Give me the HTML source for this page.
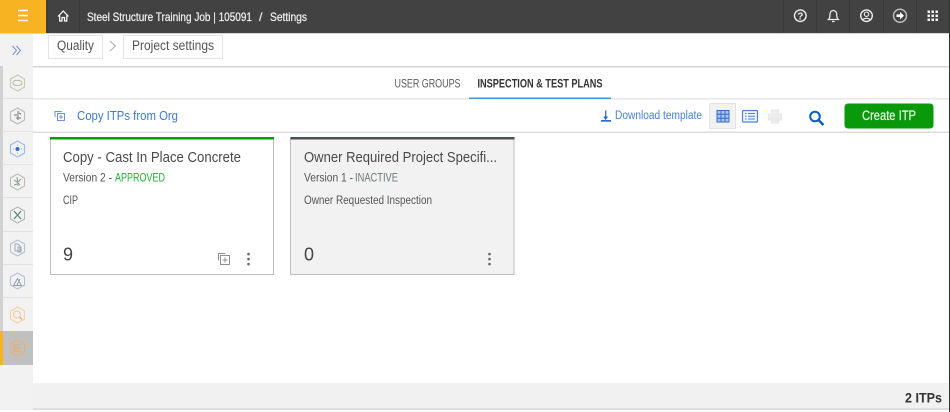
<!DOCTYPE html>
<html><head><meta charset="utf-8"><style>
html,body{margin:0;padding:0;background:#fff;width:950px;height:412px;overflow:hidden}
svg{display:block;filter:blur(0.3px)}
text{font-family:"Liberation Sans",sans-serif}
</style></head><body>
<svg width="950" height="412" viewBox="0 0 950 412" xmlns="http://www.w3.org/2000/svg">
<defs>
<symbol id="hex" viewBox="0 0 17 18" overflow="visible"><path d="M8.5 1 L15.5 5 V13 L8.5 17 L1.5 13 V5 Z" fill="none" stroke-width="1.1"/></symbol>
</defs>
<rect width="950" height="412" fill="#fff"/>

<!-- header -->
<rect width="950" height="33" fill="#424242"/>
<rect y="33" width="950" height="1" fill="#d5d5d5"/>
<rect width="46" height="33" fill="#f7b322"/>
<path d="M18 10.500h10M18 15.500h10M18 20.500h10" stroke="#fff" stroke-width="1.500"/>
<path d="M47.500 0V33M79.500 0V33M783.500 0V33M816.500 0V33M849.500 0V33M883.500 0V33M916.500 0V33" stroke="#383838"/>
<path d="M58 16.500 L63.300 11 L68.500 16.500 M59.700 15.500 V21 H62 V17.500 H64.500 V21 H66.800 V15.500" fill="none" stroke="#fff" stroke-width="1.200"/>
<text x="87" y="21" font-size="12" fill="#eee" stroke="#eee" stroke-width=".25" textLength="165" lengthAdjust="spacingAndGlyphs">Steel Structure Training Job | 105091</text>
<text x="259" y="21" font-size="12" fill="#eee" stroke="#eee" stroke-width=".25">/</text>
<text x="270" y="21" font-size="12" fill="#eee" stroke="#eee" stroke-width=".25" textLength="37" lengthAdjust="spacingAndGlyphs">Settings</text>

<circle cx="800.300" cy="15.700" r="5.800" fill="none" stroke="#eee" stroke-width="1.400"/>
<text x="800.300" y="19.500" font-size="10" font-weight="bold" fill="#eee" text-anchor="middle">?</text>
<path d="M828.500 19.500 C830 18 830 16 830 14.500 C830 12 831.300 10.500 833.300 10.500 C835.300 10.500 836.700 12 836.700 14.500 C836.700 16 836.700 18 838.200 19.500 Z" fill="none" stroke="#eee" stroke-width="1.300"/>
<path d="M832 21.500h2.600" stroke="#eee" stroke-width="1.300"/>
<circle cx="866.500" cy="15.700" r="5.800" fill="none" stroke="#eee" stroke-width="1.400"/>
<circle cx="866.500" cy="14.200" r="2.200" fill="none" stroke="#eee" stroke-width="1.100"/>
<path d="M863 20 C863.700 17.800 869.300 17.800 870 20" fill="none" stroke="#eee" stroke-width="1.100"/>
<circle cx="900" cy="15.700" r="6.500" fill="none" stroke="#bbb" stroke-width="1.500"/>
<path d="M896.500 14.400h3.500v-2.500l4 3.800-4 3.800v-2.500h-3.500z" fill="#fff"/>
<path d="M927.500 10.500h2.500v2.500h-2.500zM931.500 10.500h2.500v2.500h-2.500zM935.500 10.500h2.500v2.500h-2.500zM927.500 14.500h2.500v2.500h-2.500zM931.500 14.500h2.500v2.500h-2.500zM935.500 14.500h2.500v2.500h-2.500zM927.500 18.500h2.500v2.500h-2.500zM931.500 18.500h2.500v2.500h-2.500zM935.500 18.500h2.500v2.500h-2.500z" fill="#f2f0f0"/>

<!-- sidebar -->
<rect x="0" y="34" width="33" height="376" fill="#f2f2f2"/>
<rect x="0" y="66" width="3" height="299" fill="#d2d2d2"/>
<path d="M3 98.500H33M3 131.500H33M3 164.500H33M3 197.500H33M3 231.500H33M3 264.500H33M3 297.500H33" stroke="#e2e2e2"/>
<rect x="0" y="331" width="33" height="34" fill="#c0c0c0"/>
<rect x="0" y="331" width="3" height="34" fill="#f7b322"/>
<path d="M12.500 46 L16.500 50.500 L12.500 55 M16.500 46 L20.500 50.500 L16.500 55" fill="none" stroke="#6f94d6" stroke-width="1"/>

<use href="#hex" x="9" y="74" width="17" height="18" stroke="#c3cbb3"/>
<path d="M13 83 C13 80.500 16 80 17.500 80.500 C19.500 80 22 81 22 83 C22 85 19.500 85.500 17.500 85.500 C15.500 85.500 13 85 13 83Z" fill="none" stroke="#b7bbaa"/>
<use href="#hex" x="9" y="107" width="17" height="18" stroke="#b5bbc0"/>
<path d="M18 111v9M14 115h3M16 118h5M19 113l2 1" stroke="#777" stroke-width="1" fill="none"/>
<use href="#hex" x="9" y="140" width="17" height="18" stroke="#9db9ec"/>
<circle cx="17.500" cy="149" r="2" fill="#2f6bd0"/>
<path d="M13 149h1M21 149h1M17.500 144.500v1M17.500 152.500v1" stroke="#8caee8"/>
<use href="#hex" x="9" y="173" width="17" height="18" stroke="#bcc0b4"/>
<path d="M17 177l1 9M14 180l3 2M21 179l-3 3M14 185l3-1M20 185l-2-2" stroke="#86a08a" fill="none"/>
<use href="#hex" x="9" y="206" width="17" height="18" stroke="#b4b9bc"/>
<path d="M14 211l7 8M21 211l-7 8" stroke="#5a9075" stroke-width="1.300"/>
<use href="#hex" x="9" y="239" width="17" height="18" stroke="#b5c0d2"/>
<path d="M15 244h3l2 2v5h-5zM18 247h3v5h-3z" fill="none" stroke="#9dabbf"/>
<use href="#hex" x="9" y="272" width="17" height="18" stroke="#b5c0d2"/>
<path d="M13.500 285.500h8l-4-7zM17 285l3-6" fill="none" stroke="#8f9db6"/>
<use href="#hex" x="9" y="306" width="17" height="18" stroke="#f7d0a5"/>
<circle cx="17" cy="314.500" r="3.500" fill="none" stroke="#f5c794"/>
<path d="M19.500 317l2.500 2.500" stroke="#f0a860" stroke-width="1.200"/>
<use href="#hex" x="9" y="339" width="17" height="18" stroke="#ecb06a"/>
<path d="M14 345v6h1M14 345h7M15 348h6M15 351h6" fill="none" stroke="#ebac64"/>

<!-- breadcrumb -->
<rect x="48.500" y="35.500" width="54" height="23" fill="#fff" stroke="#e4e4e4"/>
<text x="57" y="50" font-size="13.500" fill="#555" textLength="37" lengthAdjust="spacingAndGlyphs">Quality</text>
<path d="M110 41 L115.500 46 L110 51" fill="none" stroke="#aaa" stroke-width="1"/>
<rect x="123.500" y="35.500" width="99" height="23" fill="#fff" stroke="#e4e4e4"/>
<text x="132" y="50" font-size="13.500" fill="#555" textLength="82" lengthAdjust="spacingAndGlyphs">Project settings</text>

<!-- lines -->
<rect x="33" y="66" width="917" height="1.500" fill="#d6d6d6"/>
<rect x="33" y="98" width="917" height="1.500" fill="#e8e8e8"/>
<rect x="33" y="131.500" width="917" height="1.500" fill="#dcdcdc"/>

<!-- tabs -->
<text x="394.500" y="87.500" font-size="11.500" fill="#5a5a5a" textLength="66" lengthAdjust="spacingAndGlyphs">USER GROUPS</text>
<text x="477.500" y="87.500" font-size="11.500" font-weight="bold" fill="#333" textLength="125" lengthAdjust="spacingAndGlyphs">INSPECTION &amp; TEST PLANS</text>
<rect x="469" y="97.500" width="142" height="1.500" fill="#3d9ad1"/>

<!-- toolbar -->
<path d="M55 117 V111.500 H62 M57.500 113.500 H64.500 V120.500 H57.500 Z M61 115v4M59 117h4" fill="none" stroke="#6f94d6" stroke-width="1"/>
<text x="77" y="120" font-size="13" fill="#3f78d0" textLength="101" lengthAdjust="spacingAndGlyphs">Copy ITPs from Org</text>
<path d="M605.700 110.500V119M604 116.500l1.700 2.500 1.700-2.500" fill="none" stroke="#2a6fd0" stroke-width="1.300"/>
<rect x="601" y="120" width="10" height="1.700" fill="#2a6fd0"/>
<text x="615" y="119" font-size="11.500" fill="#4a80d4" textLength="87" lengthAdjust="spacingAndGlyphs">Download template</text>

<rect x="709.500" y="103.500" width="26" height="25" fill="#f2f2f2" stroke="#e4e4e4"/>
<rect x="717" y="110.500" width="12" height="11.500" fill="#a9c4f0" stroke="#2f6bd0"/>
<path d="M721 110.500v11.500M725 110.500v11.500M717 114.300h12M717 118.200h12" stroke="#2f6bd0" stroke-width="1"/>
<rect x="742.500" y="110.500" width="15" height="11.500" rx="1" fill="#eef3fc" stroke="#4f82dc" stroke-width="1.200"/>
<path d="M745 113.500h1.500M748 113.500h7M745 116.300h1.500M748 116.300h7M745 119h1.500M748 119h7" stroke="#4f82dc"/>
<path d="M771.500 113v-3h7v3M768.500 114h13v6h-13zM771.500 118h7v5h-7z" fill="#eee" stroke="#e6e6e6"/>
<circle cx="815" cy="116.500" r="4.800" fill="none" stroke="#0a5fc0" stroke-width="2"/>
<path d="M818.500 120L823.500 125" stroke="#0a5fc0" stroke-width="2.400"/>
<rect x="844.500" y="103.500" width="89" height="25" rx="3.500" fill="#0a990a"/>
<text x="862" y="120" font-size="13.500" fill="#e8f6e8" stroke="#e8f6e8" stroke-width=".2" textLength="54" lengthAdjust="spacingAndGlyphs">Create ITP</text>

<!-- card 1 -->
<rect x="50.500" y="137.500" width="223" height="137" fill="#fff" stroke="#bdbdbd"/>
<rect x="50" y="137" width="224" height="2.500" fill="#0a990a"/>
<text x="63" y="162" font-size="15" fill="#4a4a4a" textLength="178" lengthAdjust="spacingAndGlyphs">Copy - Cast In Place Concrete</text>
<text x="63" y="181.500" font-size="11.500" fill="#555" textLength="49" lengthAdjust="spacingAndGlyphs">Version 2 -</text>
<text x="115" y="181.500" font-size="11.500" fill="#1fae2e" textLength="50" lengthAdjust="spacingAndGlyphs">APPROVED</text>
<text x="63" y="204" font-size="11.500" fill="#555" textLength="15" lengthAdjust="spacingAndGlyphs">CIP</text>
<text x="63" y="260.500" font-size="18" fill="#444">9</text>
<path d="M218.500 260.500v-7h7M220.500 255.500h9v9h-9zM225 257.500v5M222.500 260h5" fill="none" stroke="#909090" stroke-width="1"/>
<path d="M248.500 254v.1M248.500 259v.1M248.500 264v.1" stroke="#666" stroke-width="2.600" stroke-linecap="round"/>

<!-- card 2 -->
<rect x="290.500" y="137.500" width="223.500" height="137" fill="#f2f2f2" stroke="#bdbdbd"/>
<rect x="290.500" y="137" width="224" height="2.500" fill="#455354"/>
<text x="304" y="162" font-size="15" fill="#4a4a4a" textLength="193" lengthAdjust="spacingAndGlyphs">Owner Required Project Specifi...</text>
<text x="304" y="181.500" font-size="11.500" fill="#555" textLength="49" lengthAdjust="spacingAndGlyphs">Version 1 -</text>
<text x="355" y="181.500" font-size="11.500" fill="#6b7778" textLength="43" lengthAdjust="spacingAndGlyphs">INACTIVE</text>
<text x="304" y="204" font-size="11.500" fill="#555" textLength="128" lengthAdjust="spacingAndGlyphs">Owner Requested Inspection</text>
<text x="304" y="260.500" font-size="18" fill="#444">0</text>
<path d="M489.500 254v.1M489.500 259v.1M489.500 264v.1" stroke="#666" stroke-width="2.600" stroke-linecap="round"/>

<!-- footer -->
<rect x="33" y="383" width="917" height="25" fill="#f1f1f1"/>
<rect x="33" y="408" width="917" height="2" fill="#dedede"/>
<rect x="949" y="0" width="1" height="412" fill="#333"/>
<text x="905" y="402.500" font-size="14" font-weight="bold" fill="#333" textLength="37" lengthAdjust="spacingAndGlyphs">2 ITPs</text>
</svg>
</body></html>
